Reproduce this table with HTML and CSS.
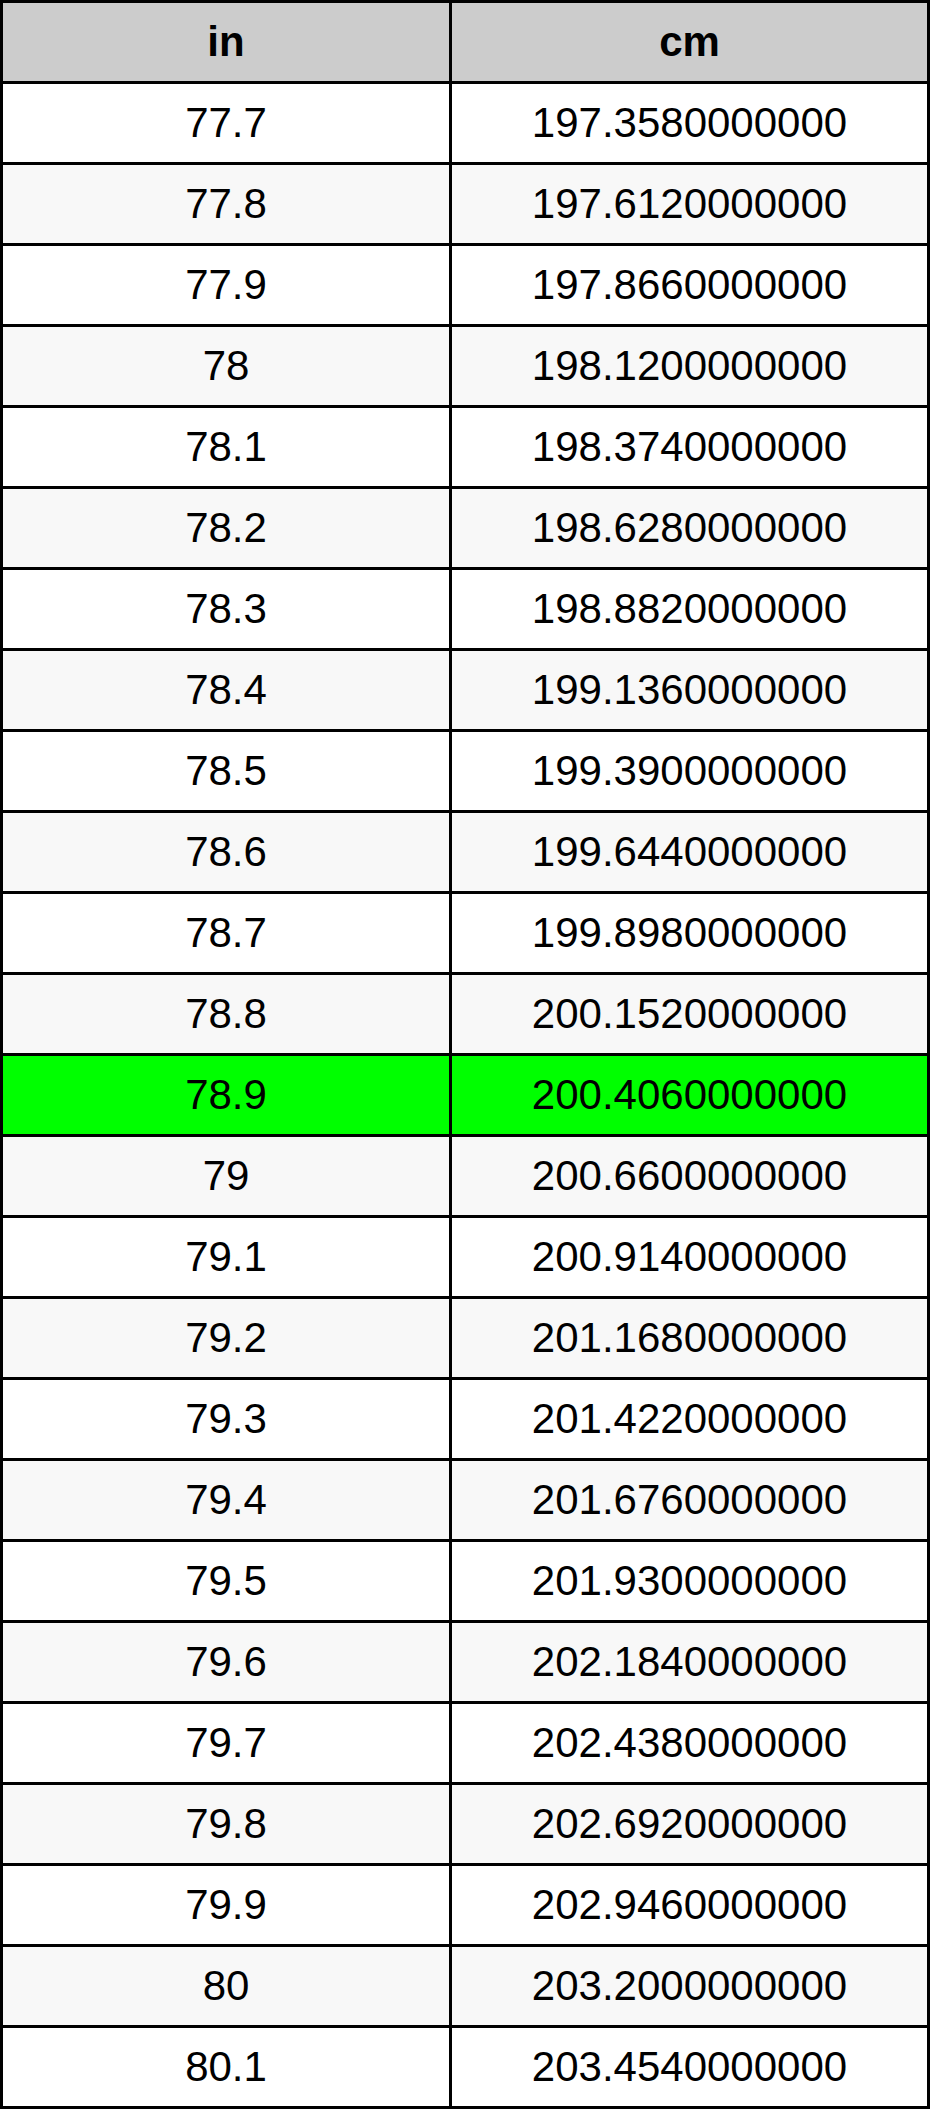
FILE: index.html
```html
<!DOCTYPE html>
<html>
<head>
<meta charset="utf-8">
<link rel="stylesheet" href="styles.css">
</head>
<body>
<table class="conv">
<colgroup><col class="c-in"><col class="c-cm"></colgroup>
<thead>
<tr><th>in</th><th>cm</th></tr>
</thead>
<tbody>
<tr><td>77.7</td><td>197.3580000000</td></tr>
<tr><td>77.8</td><td>197.6120000000</td></tr>
<tr><td>77.9</td><td>197.8660000000</td></tr>
<tr><td>78</td><td>198.1200000000</td></tr>
<tr><td>78.1</td><td>198.3740000000</td></tr>
<tr><td>78.2</td><td>198.6280000000</td></tr>
<tr><td>78.3</td><td>198.8820000000</td></tr>
<tr><td>78.4</td><td>199.1360000000</td></tr>
<tr><td>78.5</td><td>199.3900000000</td></tr>
<tr><td>78.6</td><td>199.6440000000</td></tr>
<tr><td>78.7</td><td>199.8980000000</td></tr>
<tr><td>78.8</td><td>200.1520000000</td></tr>
<tr class="hl"><td>78.9</td><td>200.4060000000</td></tr>
<tr><td>79</td><td>200.6600000000</td></tr>
<tr><td>79.1</td><td>200.9140000000</td></tr>
<tr><td>79.2</td><td>201.1680000000</td></tr>
<tr><td>79.3</td><td>201.4220000000</td></tr>
<tr><td>79.4</td><td>201.6760000000</td></tr>
<tr><td>79.5</td><td>201.9300000000</td></tr>
<tr><td>79.6</td><td>202.1840000000</td></tr>
<tr><td>79.7</td><td>202.4380000000</td></tr>
<tr><td>79.8</td><td>202.6920000000</td></tr>
<tr><td>79.9</td><td>202.9460000000</td></tr>
<tr><td>80</td><td>203.2000000000</td></tr>
<tr><td>80.1</td><td>203.4540000000</td></tr>
</tbody>
</table>
</body>
</html>
```

FILE: styles.css
```css
html, body {
  margin: 0;
  padding: 0;
  background: #ffffff;
}

.conv {
  width: 930px;
  table-layout: fixed;
  border-collapse: separate;
  border-spacing: 3px;
  background: #000000;
  font-family: "Liberation Sans", Arial, sans-serif;
  font-size: 42px;
  color: #000000;
}

.c-in { width: 446px; }
.c-cm { width: 475px; }

.conv th,
.conv td {
  height: 78px;
  padding: 0;
  text-align: center;
  vertical-align: middle;
  line-height: 1;
}

.conv th {
  background: #cccccc;
  font-weight: bold;
}

.conv tbody tr:nth-child(odd) td { background: #ffffff; }
.conv tbody tr:nth-child(even) td { background: #f8f8f8; }
.conv tbody tr.hl td { background: #00ff00; }
```
